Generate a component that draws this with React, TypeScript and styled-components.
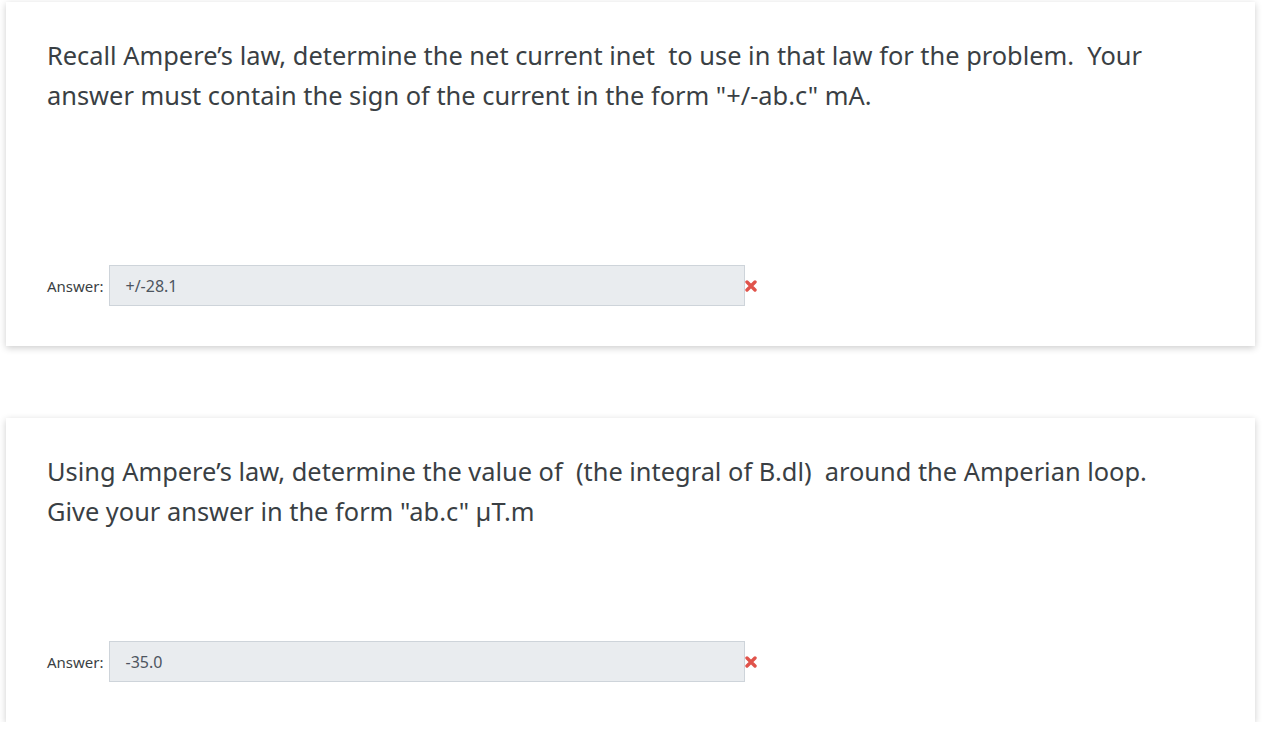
import React from 'react';
import styled, { createGlobalStyle } from 'styled-components';

const GlobalStyle = createGlobalStyle`
  body {
    margin: 0;
    background: #fff;
    font-family: "Noto Sans", "Open Sans", sans-serif;
    color: #343a40;
  }
`;

interface Question {
  lines: string[];
  extraLines: number;
  answer: string;
}

const questions: Question[] = [
  {
    lines: [
      'Recall Ampere\u2019s law, determine the net current inet\u00a0 to use in that law for the problem.\u00a0 Your',
      'answer must contain the sign of the current in the form "+/-ab.c" mA.',
    ],
    extraLines: 1,
    answer: '+/-28.1',
  },
  {
    lines: [
      'Using Ampere\u2019s law, determine the value of\u00a0 (the integral of B.dl)\u00a0 around the Amperian loop.',
      'Give your answer in the form "ab.c" \u00b5T.m',
    ],
    extraLines: 0,
    answer: '-35.0',
  },
];

export default function App() {
  return (
    <>
      <GlobalStyle />
      <Page>
        {questions.map((q, i) => (
          <Card key={i}>
            <QuestionText>
              {q.lines.map((l, j) => (
                <Line key={j}>{l}</Line>
              ))}
              {Array.from({ length: q.extraLines }).map((_, j) => (
                <Line key={'e' + j}>{'\u00a0'}</Line>
              ))}
            </QuestionText>
            <AnswerRow>
              <Label>Answer:</Label>
              <AnswerBox>{q.answer}</AnswerBox>
              <WrongIcon viewBox="0 0 12 12">
                <path d="M2 2 L10 10 M10 2 L2 10" stroke="#e0534b" strokeWidth="3.4" strokeLinecap="round" />
              </WrongIcon>
            </AnswerRow>
          </Card>
        ))}
      </Page>
    </>
  );
}

const Page = styled.div`
  display: flex;
  flex-direction: column;
  gap: 72px;
  padding: 2px 7px 0 6px;
`;

const Card = styled.div`
  background: #fff;
  box-shadow: 0 2px 7px rgba(0, 0, 0, 0.2);
  padding: 33px 41px 40px;
  display: flex;
  flex-direction: column;
  gap: 110px;
`;

const QuestionText = styled.div`
  font-size: 25.4px;
  line-height: 40px;
  color: #3a3f44;
`;

const Line = styled.div`
  white-space: pre;
`;

const AnswerRow = styled.div`
  display: flex;
  align-items: center;
  height: 41px;
`;

const Label = styled.span`
  font-size: 15px;
  color: #3a3f44;
  margin-right: 5px;
`;

const AnswerBox = styled.div`
  box-sizing: border-box;
  width: 636px;
  height: 41px;
  background: #e9ecef;
  border: 1px solid #ced4da;
  padding: 0 16px;
  display: flex;
  align-items: center;
  font-size: 16px;
  color: #4d5560;
`;

const WrongIcon = styled.svg`
  width: 12px;
  height: 12px;
  flex: none;
`;
